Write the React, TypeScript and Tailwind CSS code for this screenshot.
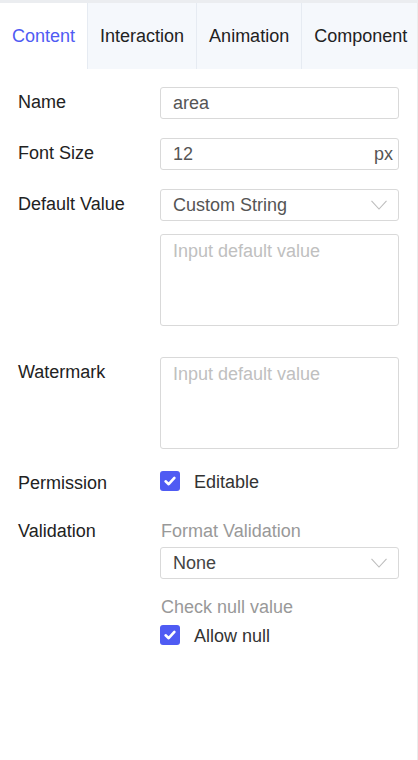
import React from 'react';

const Chevron: React.FC = () => (
    <svg width="16" height="10" viewBox="0 0 16 10" fill="none" className="shrink-0">
        <path d="M0.5 0.8 L8 9 L15.5 0.8" stroke="#bdbdbd" strokeWidth="1.1" />
    </svg>
);

const Check: React.FC = () => (
    <span className="w-5 h-5 rounded-[3px] bg-[#4f5bf3] flex items-center justify-center shrink-0">
        <svg width="14" height="14" viewBox="0 0 14 14" fill="none">
            <path d="M2.6 7.3 L5.7 10.2 L11.4 3.9" stroke="white" strokeWidth="2.6" strokeLinecap="round" strokeLinejoin="round" />
        </svg>
    </span>
);

const Label: React.FC<{ children: React.ReactNode }> = ({ children }) => (
    <div className="leading-[30px] text-[#222]">{children}</div>
);

const tabs = ['Content', 'Interaction', 'Animation', 'Component'];

const App: React.FC = () => {
    return (
        <div className="w-[418px] min-h-[760px] bg-white border-t-[3px] border-t-[#ebedf0] border-r border-r-[#ececec] font-['Liberation_Sans',Arial,sans-serif] text-[18px] text-[#222]">
            {/* Tabs */}
            <div className="flex h-[66px] bg-[#f5f8fc] overflow-hidden whitespace-nowrap">
                {tabs.map((t, i) => (
                    <div
                        key={t}
                        className={
                            i === 0
                                ? 'shrink-0 px-3 flex items-center bg-white text-[#4f5bf3]'
                                : 'shrink-0 px-3 flex items-center border-l border-l-[#e6ebf2] text-[#222]'
                        }
                    >
                        {t}
                    </div>
                ))}
            </div>

            {/* Form */}
            <div className="pt-[18px] pl-[18px] grid grid-cols-[142px_239px]">
                {/* Name */}
                <Label>Name</Label>
                <input
                    readOnly
                    defaultValue="area"
                    className="h-8 w-full border border-[#d9d9d9] rounded-[3px] px-3 text-[#555] outline-none"
                />

                <div className="col-span-2 h-[19px]" />

                {/* Font size */}
                <Label>Font Size</Label>
                <div className="h-8 border border-[#d9d9d9] rounded-[3px] pl-3 pr-[5px] flex items-center text-[#555]">
                    <span className="flex-1">12</span>
                    <span>px</span>
                </div>

                <div className="col-span-2 h-[19px]" />

                {/* Default value */}
                <Label>Default Value</Label>
                <div className="flex flex-col gap-[13px]">
                    <div className="h-8 border border-[#d9d9d9] rounded-[3px] pl-3 pr-[11px] flex items-center justify-between text-[#555]">
                        <span>Custom String</span>
                        <Chevron />
                    </div>
                    <textarea
                        readOnly
                        placeholder="Input default value"
                        className="h-[92px] w-full resize-none border border-[#d9d9d9] rounded-[3px] px-3 py-[4px] leading-[24px] text-[#555] placeholder:text-[#c0c0c0] outline-none"
                    />
                </div>

                <div className="col-span-2 h-[31px]" />

                {/* Watermark */}
                <Label>Watermark</Label>
                <textarea
                    readOnly
                    placeholder="Input default value"
                    className="h-[92px] w-full resize-none border border-[#d9d9d9] rounded-[3px] px-3 py-[4px] leading-[24px] text-[#555] placeholder:text-[#c0c0c0] outline-none"
                />

                <div className="col-span-2 h-[20px]" />

                {/* Permission */}
                <div className="h-6 leading-6 pt-[2px]">Permission</div>
                <div className="h-6 flex items-center gap-[14px]">
                    <Check />
                    <span className="leading-6 pt-[2px] text-[#333]">Editable</span>
                </div>

                <div className="col-span-2 h-[26px]" />

                {/* Validation */}
                <div className="leading-6">Validation</div>
                <div className="flex flex-col">
                    <div className="leading-6 text-[#999] pl-px">Format Validation</div>
                    <div className="mt-[4px] h-8 border border-[#d9d9d9] rounded-[3px] pl-3 pr-[11px] flex items-center justify-between text-[#444]">
                        <span>None</span>
                        <Chevron />
                    </div>
                    <div className="mt-[16px] leading-6 text-[#999] pl-px">Check null value</div>
                    <div className="mt-[4px] h-6 flex items-center gap-[14px]">
                        <Check />
                        <span className="leading-6 pt-[2px] text-[#333]">Allow null</span>
                    </div>
                </div>
            </div>
        </div>
    );
};

export default App;
